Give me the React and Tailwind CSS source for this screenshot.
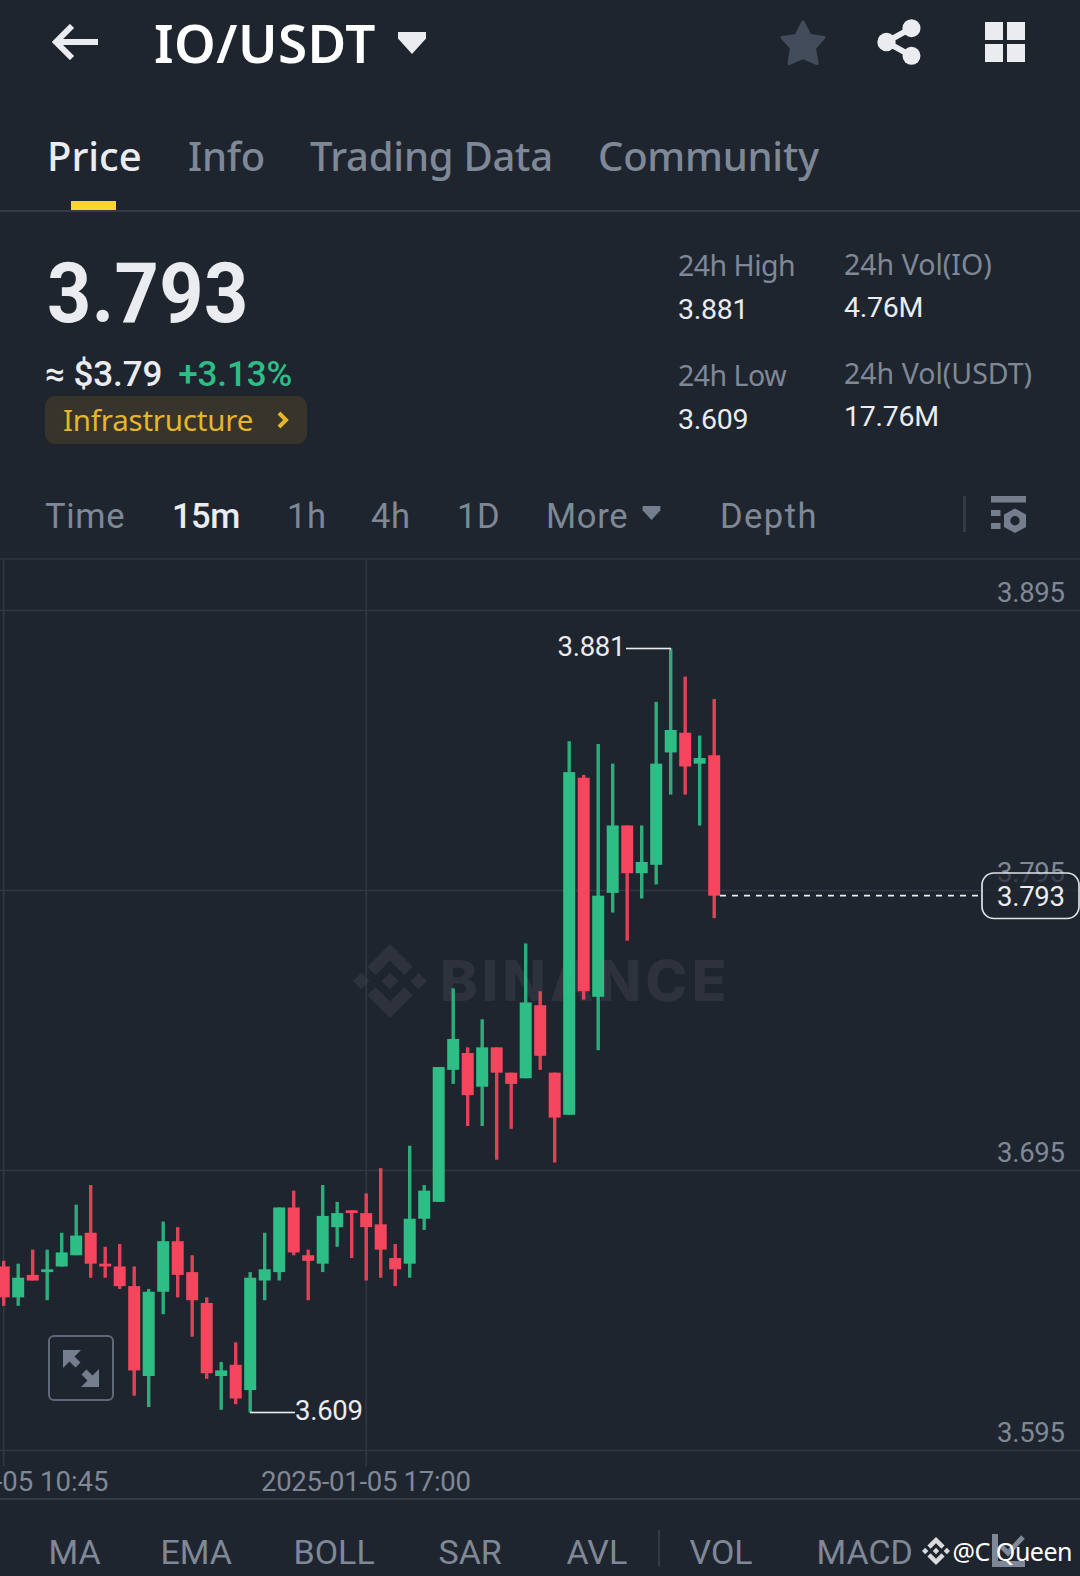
import { Fragment } from 'react';
import clsx from 'clsx';

const TABS = [
    { label: 'Price', width: 'w-[141px]', active: true },
    { label: 'Info', width: 'w-[122px]' },
    { label: 'Trading Data', width: 'w-[288px]' },
    { label: 'Community', width: 'w-[230px]' },
];

const INTERVALS = [
    { label: 'Time', width: 'w-[127px]' },
    { label: '15m', width: 'w-[115px]', active: true },
    { label: '1h', width: 'w-[84px]' },
    { label: '4h', width: 'w-[86px]' },
    { label: '1D', width: 'w-[89px]' },
    { label: 'More', width: 'w-[174px]', caret: true },
    { label: 'Depth', width: 'w-[100px]', wide: true },
];

const INDICATORS = [
    { label: 'MA', width: 'w-[112px]' },
    { label: 'EMA', width: 'w-[133px]' },
    { label: 'BOLL', width: 'w-[145px]' },
    { label: 'SAR', width: 'w-[128px]' },
    { label: 'AVL', width: 'w-[91px]', divider: true },
    { label: 'VOL', width: 'w-[127px]' },
    { label: 'MACD', width: 'w-[100px]' },
];

// [direction, high, body top, body bottom, low], prices in 1/1000 USDT
const CANDLES = [
    ['down', 3663, 3661, 3650, 3647],
    ['up', 3662, 3657, 3650, 3647],
    ['down', 3667, 3658, 3656, 3656],
    ['up', 3667, 3660, 3659, 3649],
    ['up', 3673, 3666, 3661, 3661],
    ['up', 3683, 3672, 3665, 3665],
    ['down', 3690, 3673, 3662, 3657],
    ['down', 3668, 3662, 3661, 3657],
    ['down', 3669, 3661, 3654, 3653],
    ['down', 3661, 3654, 3624, 3615],
    ['up', 3653, 3652, 3622, 3611],
    ['up', 3677, 3670, 3652, 3644],
    ['down', 3675, 3670, 3658, 3650],
    ['down', 3665, 3659, 3649, 3636],
    ['down', 3650, 3648, 3623, 3621],
    ['up', 3627, 3624, 3622, 3610],
    ['down', 3634, 3626, 3614, 3612],
    ['up', 3659, 3657, 3617, 3609],
    ['up', 3673, 3660, 3656, 3649],
    ['up', 3682, 3682, 3659, 3656],
    ['down', 3688, 3682, 3666, 3665],
    ['down', 3667, 3665, 3663, 3649],
    ['up', 3690, 3679, 3662, 3659],
    ['up', 3684, 3680, 3675, 3668],
    ['down', 3681, 3681, 3680, 3664],
    ['down', 3687, 3680, 3675, 3656],
    ['down', 3696, 3676, 3667, 3657],
    ['down', 3669, 3664, 3660, 3654],
    ['up', 3704, 3678, 3662, 3657],
    ['up', 3690, 3688, 3678, 3674],
    ['up', 3732, 3732, 3684, 3684],
    ['up', 3760, 3742, 3731, 3726],
    ['down', 3739, 3737, 3722, 3711],
    ['up', 3749, 3739, 3725, 3711],
    ['down', 3739, 3739, 3730, 3699],
    ['down', 3730, 3730, 3726, 3710],
    ['up', 3776, 3755, 3728, 3728],
    ['down', 3759, 3754, 3736, 3731],
    ['down', 3730, 3730, 3714, 3698],
    ['up', 3848, 3837, 3715, 3715],
    ['down', 3836, 3835, 3759, 3756],
    ['up', 3847, 3793, 3757, 3738],
    ['up', 3840, 3818, 3794, 3787],
    ['down', 3818, 3818, 3801, 3777],
    ['up', 3818, 3805, 3801, 3792],
    ['up', 3862, 3840, 3804, 3797],
    ['up', 3881, 3852, 3844, 3829],
    ['down', 3871, 3851, 3839, 3829],
    ['up', 3850, 3842, 3840, 3818],
    ['down', 3863, 3843, 3793, 3785],
];

const GRID = [
    { label: '3.895', y: 50.5 },
    { label: '3.795', y: 330.5 },
    { label: '3.695', y: 610.5 },
    { label: '3.595', y: 890.5 },
];

const candleX = (i) => 3.7 + i * 14.5;
const priceY = (p) => 88.5 + (3881 - p) * 2.809;

function Caret({ className }) {
    return (
        <svg viewBox="0 0 28 22" className={className} fill="currentColor">
            <path d="M0 0h28v6.500L14 22 0 6.500Z" />
        </svg>
    );
}

function BinanceMark({ className }) {
    return (
        <svg viewBox="0 0 126.600 126.600" className={className} fill="currentColor">
            <path d="M38.700 53.200 63.300 28.600 87.900 53.200 102.200 38.900 63.300 0 24.400 38.900Z" />
            <path d="M0 63.300 14.300 49 28.600 63.300 14.300 77.600Z" />
            <path d="M38.700 73.400 63.300 98 87.900 73.400 102.200 87.700 63.300 126.600 24.400 87.700Z" />
            <path d="M98 63.300 112.300 49 126.600 63.300 112.300 77.600Z" />
            <path d="M77.800 63.300 63.300 48.800 48.800 63.300 63.300 77.800Z" />
        </svg>
    );
}

function Header() {
    return (
        <header className="flex h-[84px] items-center pr-[55px] pl-[52px] text-[#eaecef]">
            <svg viewBox="0 0 46 36" className="h-9 w-[46px] shrink-0" fill="none" stroke="currentColor" strokeWidth="6">
                <path d="M46 18H5M20 2 4 18l16 16" />
            </svg>
            <h1 className="ml-[56px] w-[244px] pt-0.5 text-[53px] leading-[84px] font-semibold tracking-[0.009em] text-white">IO/USDT</h1>
            <Caret className="mt-0.5 h-[22px] w-7 shrink-0" />
            <div className="ml-auto flex items-center">
                <svg viewBox="0 0 46 46" className="mt-0.5 size-[46px] text-[#434c5a]" fill="currentColor" stroke="currentColor" strokeWidth="3" strokeLinejoin="round">
                    <path d="M23 2 30 15.500 44 17.500 34.500 28 37 43.500 23 37.500 9 43.500 11.500 28 2 17.500 16 15.500Z" />
                </svg>
                <svg viewBox="0 0 44 46" className="ml-[51px] h-[46px] w-11" fill="currentColor">
                    <path d="M34.500 9 9.500 23l25 14" fill="none" stroke="currentColor" strokeWidth="6" />
                    <circle cx="34.500" cy="9.200" r="9" />
                    <circle cx="9.500" cy="23" r="9.200" />
                    <circle cx="34.500" cy="36.800" r="9" />
                </svg>
                <div className="ml-[64px] grid size-10 grid-cols-2 gap-1">
                    <span className="bg-[#eaecef]" />
                    <span className="bg-[#eaecef]" />
                    <span className="bg-[#eaecef]" />
                    <span className="bg-[#eaecef]" />
                </div>
            </div>
        </header>
    );
}

function Tabs() {
    return (
        <nav className="flex h-[128px] border-b-2 border-[#333b47] pl-[47px]">
            {TABS.map((tab) => (
                <div key={tab.label} className={clsx('flex shrink-0', tab.width)}>
                    <div className="flex flex-col items-center justify-between pt-[42px]">
                        <span
                            className={clsx(
                                'text-[40px] leading-[60px] font-medium whitespace-nowrap',
                                tab.active ? 'text-[#eaecef]' : 'tracking-[-0.006em] text-[#7f8896]'
                            )}
                        >
                            {tab.label}
                        </span>
                        {tab.active && <span className="mr-0.5 h-[9px] w-[45px] bg-[#fcd535]" />}
                    </div>
                </div>
            ))}
        </nav>
    );
}

function Stat({ label, value, tight }) {
    return (
        <div className={clsx('flex flex-col', tight ? 'gap-[5px]' : 'gap-1')}>
            <span className={clsx('text-[28.5px] leading-10 whitespace-nowrap text-[#7f8896]', tight && 'tracking-[-0.018em]')}>{label}</span>
            <span className="font-[Roboto,sans-serif] text-[28.5px] leading-10 tracking-[-0.01em] text-[#eaecef]">{value}</span>
        </div>
    );
}

function Summary() {
    return (
        <section className="flex h-[262px] pl-[45px]">
            <div className="flex w-[633px] shrink-0 flex-col items-start pt-[42px] font-[Roboto,sans-serif]">
                <div className="ml-0.5 origin-left scale-x-[0.92] text-[84px] leading-[80px] font-bold tracking-[0.005em] text-[#eaecef]">3.793</div>
                <div className="mt-[19px] flex gap-[16px] text-[35px] leading-[44px] font-medium tracking-[-0.003em]">
                    <span className="text-[#eaecef]">≈ $3.79</span>
                    <span className="text-[#2ebd85]">+3.13%</span>
                </div>
                <div className="-mt-px flex h-12 w-[262px] items-center justify-between rounded-[10px] bg-[#36342b] pr-[18px] pl-[18px] text-[#e5b52a]">
                    <span className="font-['Noto_Sans',sans-serif] text-[29.5px] leading-[44px] tracking-[-0.007em]">Infrastructure</span>
                    <svg viewBox="0 0 12 18" className="h-[18px] w-3" fill="none" stroke="currentColor" strokeWidth="4">
                        <path d="m2 2 7 7-7 7" />
                    </svg>
                </div>
            </div>
            <div className="flex w-[166px] shrink-0 flex-col gap-[25px] pt-[33px]">
                <Stat label="24h High" value="3.881" tight />
                <Stat label="24h Low" value="3.609" tight />
            </div>
            <div className="flex flex-col gap-[25px] pt-8">
                <Stat label="24h Vol(IO)" value="4.76M" />
                <Stat label="24h Vol(USDT)" value="17.76M" />
            </div>
        </section>
    );
}

function Intervals() {
    return (
        <nav className="flex h-[86px] items-center border-b-2 border-[#2a313c] pl-[45px] font-[Roboto,sans-serif] text-[34.5px] leading-[44px] tracking-[0.02em] text-[#7f8896]">
            {INTERVALS.map((item) => (
                <div key={item.label} className={clsx('flex shrink-0 items-center', item.width)}>
                    <span className={clsx(item.active && 'font-medium tracking-[-0.015em] text-[#eaecef]', item.wide && 'tracking-[0.042em]')}>
                        {item.label}
                    </span>
                    {item.caret && <Caret className="mb-1.5 ml-[14px] h-3.5 w-[19px] text-[#757e8f]" />}
                </div>
            ))}
            <span className="mb-1 ml-[143px] h-9 w-[3px] bg-[#333a45]" />
            <svg viewBox="0 0 35 37" className="mb-1 ml-[25px] h-[37px] w-[35px] text-[#757e8f]" fill="currentColor">
                <path d="M0 0h35v6.500H0ZM0 14h9.500v6H0ZM0 27h9.500v6H0Z" />
                <path fillRule="evenodd" d="M24 12.500 35 18.600v12.300L24 37 13 30.900V18.600ZM24 20a4.700 4.700 0 1 0 0 9.400 4.700 4.700 0 0 0 0-9.400Z" />
            </svg>
        </nav>
    );
}

function Chart() {
    const lastY = priceY(3793);
    return (
        <section className="relative h-[938px] overflow-hidden">
            <div className="absolute top-[383px] left-[353px] flex items-center text-[#2d323d]">
                <BinanceMark className="size-[74px]" />
                <span className="ml-[13px] font-[Inter,sans-serif] text-[57px] leading-[75px] font-extrabold tracking-[0.07em]">BINANCE</span>
            </div>

            <svg viewBox="0 0 1080 938" className="absolute inset-0 h-[938px] w-[1080px] font-[Roboto,sans-serif] text-[27.5px]">
                <g stroke="#313843" strokeWidth="1.600">
                    {GRID.map((line) => (
                        <line key={line.label} x1="0" x2="1080" y1={line.y} y2={line.y} />
                    ))}
                    <line x1="3.700" x2="3.700" y1="0" y2="906" />
                    <line x1="366.200" x2="366.200" y1="0" y2="906" />
                </g>

                {GRID.map((line) => (
                    <text key={line.label} x="997" y={line.y - 8.5} textLength="68" fill="#7f8896">
                        {line.label}
                    </text>
                ))}

                {CANDLES.map(([dir, high, top, bottom, low], i) => (
                    <g key={i} fill={dir === 'up' ? '#2ebd85' : '#f6465d'}>
                        <rect x={candleX(i) - 1.7} y={priceY(high)} width="3.400" height={priceY(low) - priceY(high)} opacity="0.900" />
                        <rect x={candleX(i) - 6} y={priceY(top)} width="12" height={priceY(bottom) - priceY(top)} />
                    </g>
                ))}

                {/* session high and low markers */}
                <g fill="#eaecef">
                    <rect x="626" y="87.700" width="45" height="1.600" />
                    <text x="557.500" y="95.700" textLength="68">3.881</text>
                    <rect x="250" y="851.700" width="45" height="1.600" />
                    <text x="295" y="860" textLength="68">3.609</text>
                </g>

                {/* last price */}
                <line x1="720" x2="981" y1={lastY} y2={lastY} stroke="#eaecef" strokeWidth="1.800" strokeDasharray="6 6" />
                <rect x="982" y="313" width="97" height="45.500" rx="12" fill="#1f252f" fillOpacity="0.700" stroke="#dfe2e7" strokeWidth="1.700" />
                <text x="997" y="346" textLength="68" fill="#eaecef">3.793</text>

                <g fill="#7f8896">
                    <text x="108.500" y="930.500" textAnchor="end">2025-01-05 10:45</text>
                    <text x="261" y="930.500" textLength="210">2025-01-05 17:00</text>
                </g>
            </svg>

            <button className="absolute top-[775px] left-12 flex size-[66px] items-center justify-center rounded-md border-2 border-[#5f6878] text-[#757e8f]">
                <svg viewBox="0 0 36 37" className="h-[37px] w-9" fill="currentColor">
                    <path d="M0 0h18l-6.500 6.500 6 6-5 5-6-6L0 18ZM36 37H18l6.500-6.500-6-6 5-5 6 6L36 19Z" />
                </svg>
            </button>
        </section>
    );
}

function Indicators() {
    return (
        <footer className="relative flex h-[78px] items-start overflow-hidden border-t-2 border-[#333b47] pt-[30px] pl-[48.5px] font-[Roboto,sans-serif] text-[34px] leading-[44px] text-[#7f8896]">
            {INDICATORS.map((item) => (
                <Fragment key={item.label}>
                    <span className={clsx('shrink-0', item.width)}>{item.label}</span>
                    {item.divider && <span className="mr-[30px] h-[37px] w-0.5 shrink-0 bg-[#333a45]" />}
                </Fragment>
            ))}
            <svg viewBox="0 0 33 33" className="mt-[4px] ml-[75px] size-[33px] shrink-0" fill="none" stroke="currentColor" strokeWidth="6">
                <path d="M3 0v30h30" />
                <path d="m9 12 7 7L31 3" strokeWidth="5" />
            </svg>

            {/* author credit over the toolbar */}
            <div className="absolute top-[29px] right-[8px] flex items-center font-['Noto_Sans',sans-serif] text-[25px] tracking-[-0.02em] text-white">
                <BinanceMark className="mr-[3px] size-7 text-[#d9dadb]" />
                <span className="whitespace-nowrap">@C Queen</span>
            </div>
        </footer>
    );
}

export default function App() {
    return (
        <main className="h-[1576px] w-[1080px] overflow-hidden bg-[#1f252f] font-['Noto_Sans',sans-serif]">
            <Header />
            <Tabs />
            <Summary />
            <Intervals />
            <Chart />
            <Indicators />
        </main>
    );
}
